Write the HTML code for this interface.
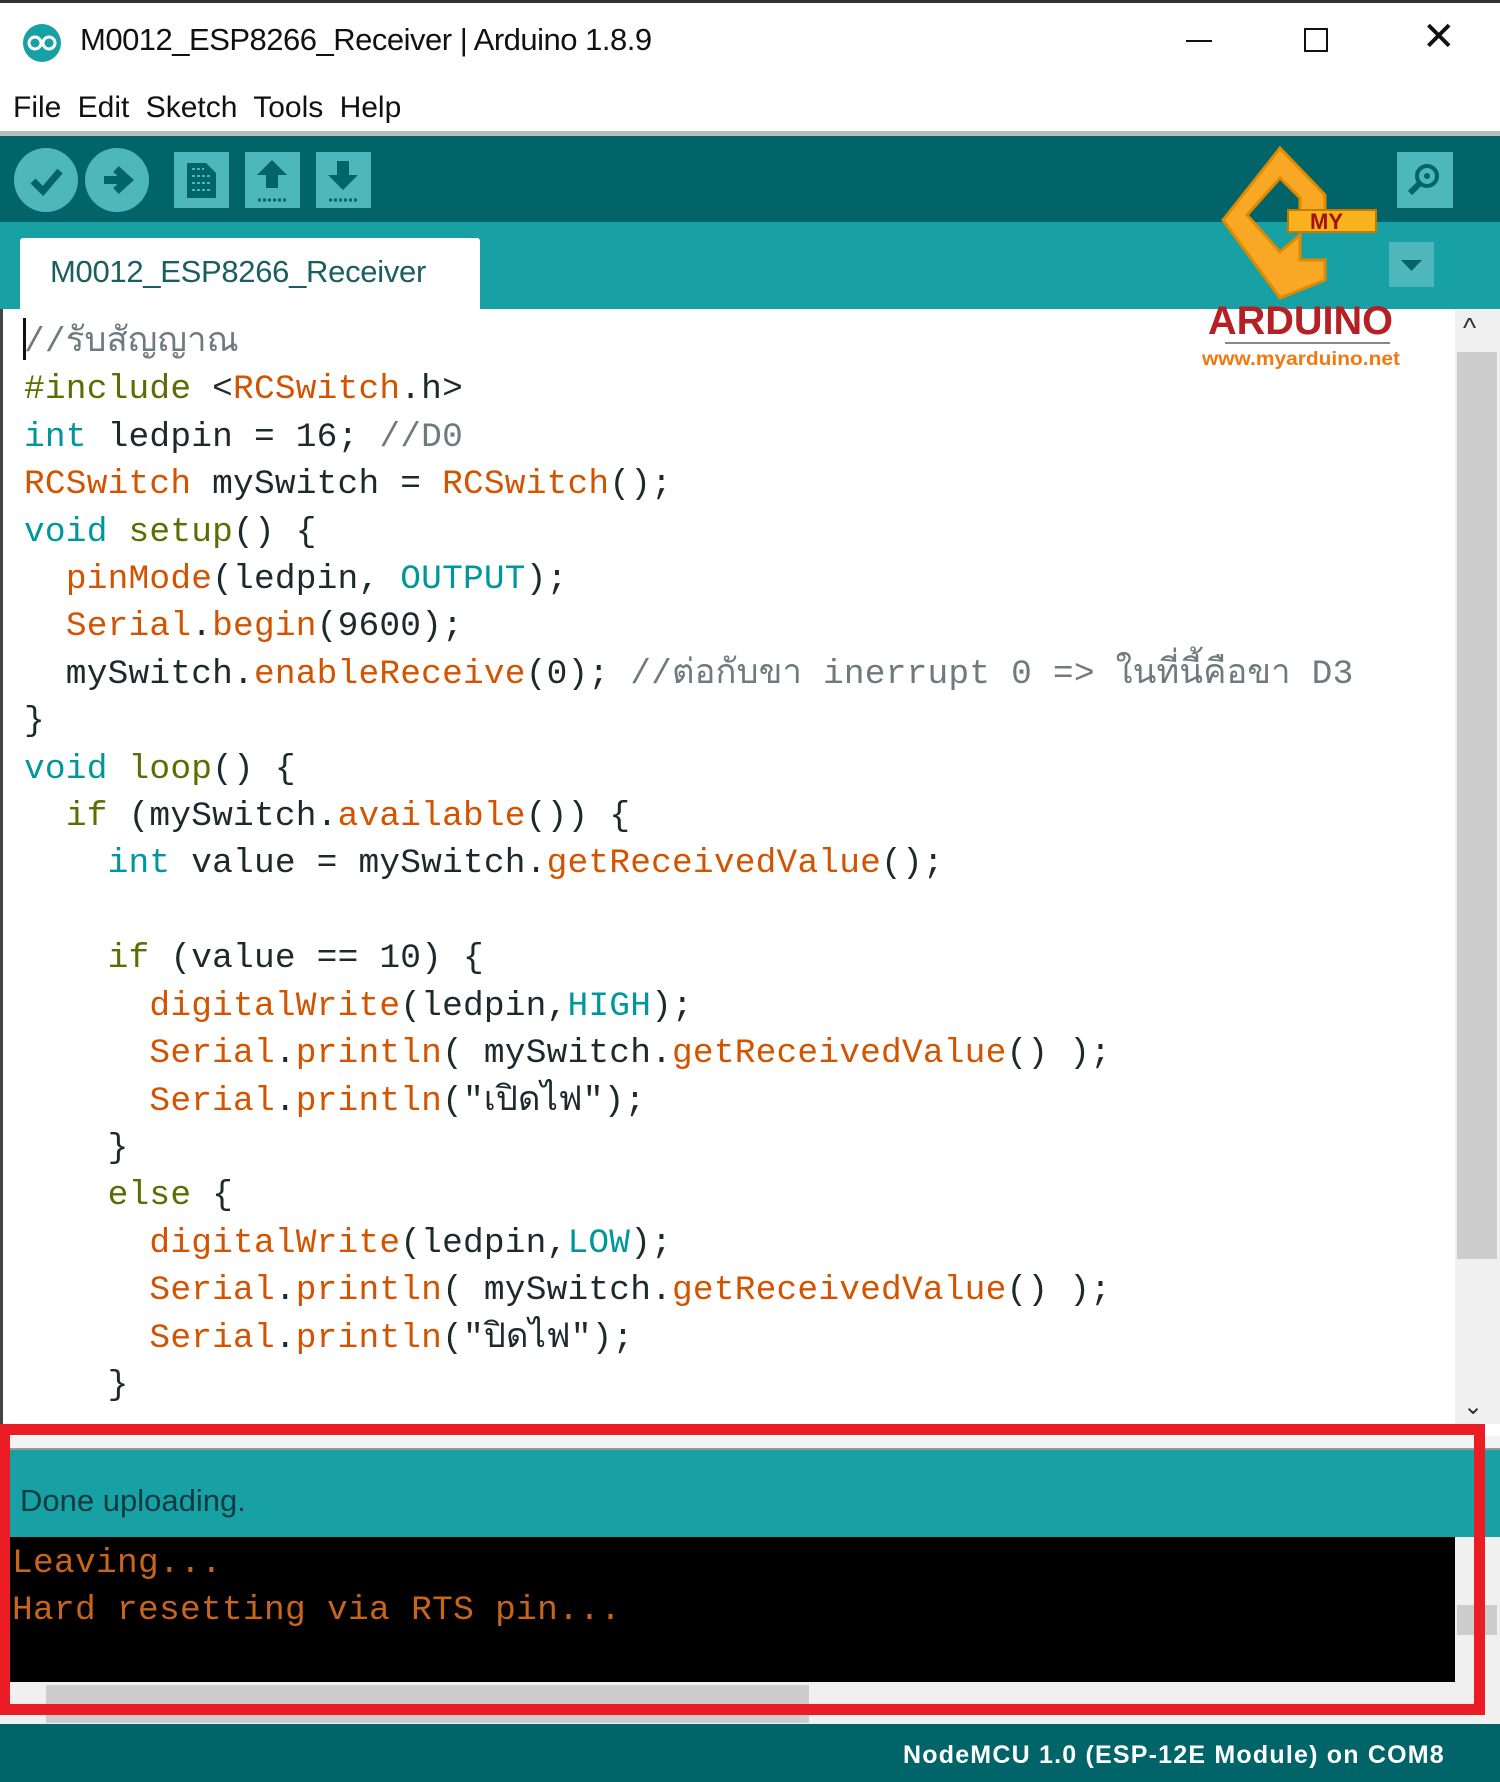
<!DOCTYPE html>
<html><head><meta charset="utf-8"><style>
*{margin:0;padding:0;box-sizing:border-box}
body{width:1500px;height:1782px;position:relative;background:#fff;overflow:hidden;font-family:"Liberation Sans","Noto Sans CJK SC",sans-serif}
.abs{position:absolute}
pre{position:absolute;left:24px;top:319px;font-family:"Liberation Mono","Noto Sans CJK SC",monospace;font-size:34.5px;line-height:47.4px;color:#1c2a2e;letter-spacing:0.2px}
.k{color:#00979c}.f{color:#d35400}.o{color:#5e6d03}.c{color:#6d7a7e}
</style></head><body>
<div class="abs" style="left:0;top:0;width:1500px;height:3px;background:#333"></div>
<svg class="abs" style="left:22px;top:23px" width="40" height="40"><circle cx="20" cy="20" r="19" fill="#17a1a5"/><circle cx="13" cy="20" r="6" fill="none" stroke="#fff" stroke-width="3"/><circle cx="27" cy="20" r="6" fill="none" stroke="#fff" stroke-width="3"/></svg>
<div class="abs" style="left:80px;top:22px;font-size:31px;color:#111;letter-spacing:-0.5px">M0012_ESP8266_Receiver | Arduino 1.8.9</div>
<div class="abs" style="left:1186px;top:40px;width:26px;height:2px;background:#111"></div>
<div class="abs" style="left:1304px;top:28px;width:24px;height:24px;border:2px solid #111"></div>
<div class="abs" style="left:1422px;top:14px;font-size:40px;color:#111;font-weight:300">✕</div>
<div class="abs" style="left:13px;top:91px;font-size:30px;color:#111;word-spacing:8px">File Edit Sketch Tools Help</div>
<div class="abs" style="left:0;top:131px;width:1500px;height:5px;background:#b9bdbd"></div>
<div class="abs" style="left:0;top:136px;width:1500px;height:86px;background:#006468"></div>
<svg class="abs" style="left:0;top:136px" width="400" height="86">
<circle cx="46" cy="44" r="32" fill="#4db7bb"/><path d="M33 45 L43 55 L60 35" stroke="#006468" stroke-width="7" fill="none"/>
<circle cx="117" cy="44" r="32" fill="#4db7bb"/><path d="M104 44 H122 M116 33 L128 44 L116 55" stroke="#006468" stroke-width="8" fill="none"/>
<rect x="174" y="16" width="55" height="56" fill="#4db7bb"/><path d="M187 27 H206 L216 37 V62 H187 Z" fill="#006468"/>
<path d="M192 33 H204 M192 40 H211 M192 47 H211 M192 54 H211" stroke="#4db7bb" stroke-width="2" stroke-dasharray="3 2"/>
<rect x="245" y="16" width="55" height="56" fill="#4db7bb"/><path d="M272 24 L287 39 H278 V52 H266 V39 H257 Z" fill="#006468"/><path d="M258 64 H287" stroke="#006468" stroke-width="3" stroke-dasharray="3 2"/>
<rect x="316" y="16" width="55" height="56" fill="#4db7bb"/><path d="M343 54 L358 39 H349 V25 H337 V39 H328 Z" fill="#006468"/><path d="M329 64 H358" stroke="#006468" stroke-width="3" stroke-dasharray="3 2"/>
</svg>
<svg class="abs" style="left:1397px;top:152px" width="56" height="56"><rect width="56" height="56" fill="#4db7bb"/><circle cx="30" cy="24" r="10" fill="none" stroke="#006468" stroke-width="4"/><circle cx="30" cy="24" r="3" fill="#006468"/><path d="M22 32 L13 41" stroke="#006468" stroke-width="6"/></svg>
<div class="abs" style="left:0;top:222px;width:1500px;height:87px;background:#17a1a5"></div>
<div class="abs" style="left:20px;top:238px;width:460px;height:71px;background:#fff;border-radius:3px 3px 0 0"></div>
<div class="abs" style="left:50px;top:254px;font-size:31px;color:#1b5e60;letter-spacing:-0.3px">M0012_ESP8266_Receiver</div>
<svg class="abs" style="left:1389px;top:242px" width="45" height="45"><rect width="45" height="45" fill="#4db7bb"/><path d="M12 18 H33 L22.5 29 Z" fill="#006468"/></svg>
<div class="abs" style="left:0;top:309px;width:3px;height:1115px;background:#444"></div>
<div class="abs" style="left:1455px;top:309px;width:45px;height:1115px;background:#f0f0f0"></div>
<div class="abs" style="left:1457px;top:352px;width:40px;height:907px;background:#cdcdcd"></div>
<div class="abs" style="left:1463px;top:312px;font-size:28px;color:#333">^</div>
<div class="abs" style="left:1463px;top:1392px;font-size:24px;color:#333">⌄</div>
<div class="abs" style="left:23px;top:318px;width:3px;height:42px;background:#111"></div>
<pre><span class="c">//รับสัญญาณ</span>
<span class="o">#include</span> &lt;<span class="f">RCSwitch</span>.h&gt;
<span class="k">int</span> ledpin = 16; <span class="c">//D0</span>
<span class="f">RCSwitch</span> mySwitch = <span class="f">RCSwitch</span>();
<span class="k">void</span> <span class="o">setup</span>() {
  <span class="f">pinMode</span>(ledpin, <span class="k">OUTPUT</span>);
  <span class="f">Serial</span>.<span class="f">begin</span>(9600);
  mySwitch.<span class="f">enableReceive</span>(0); <span class="c">//ต่อกับขา inerrupt 0 =&gt; ในที่นี้คือขา D3</span>
}
<span class="k">void</span> <span class="o">loop</span>() {
  <span class="o">if</span> (mySwitch.<span class="f">available</span>()) {
    <span class="k">int</span> value = mySwitch.<span class="f">getReceivedValue</span>();

    <span class="o">if</span> (value == 10) {
      <span class="f">digitalWrite</span>(ledpin,<span class="k">HIGH</span>);
      <span class="f">Serial</span>.<span class="f">println</span>( mySwitch.<span class="f">getReceivedValue</span>() );
      <span class="f">Serial</span>.<span class="f">println</span>("เปิดไฟ");
    }
    <span class="o">else</span> {
      <span class="f">digitalWrite</span>(ledpin,<span class="k">LOW</span>);
      <span class="f">Serial</span>.<span class="f">println</span>( mySwitch.<span class="f">getReceivedValue</span>() );
      <span class="f">Serial</span>.<span class="f">println</span>("ปิดไฟ");
    }</pre>
<svg class="abs" style="left:1195px;top:140px" width="230" height="240">
<path d="M85 8 L130 55 L130 80 L105 80 L105 58 L85 38 L52 75 L85 112 L105 95 L105 120 L130 120 L130 140 L85 158 L28 80 Z" fill="#f9a825" stroke="#e08a00" stroke-width="3"/>
<rect x="93" y="70" width="88" height="22" fill="#f7b21d" stroke="#c77a00" stroke-width="2"/>
<text x="115" y="89" font-family="Liberation Sans" font-weight="bold" font-size="22" fill="#a01010">MY</text>
<text x="13" y="194" font-family="Liberation Sans" font-weight="bold" font-size="40" fill="#b52025" textLength="185" lengthAdjust="spacingAndGlyphs">ARDUINO</text>
<rect x="30" y="202" width="165" height="2" fill="#888"/>
<text x="7" y="225" font-family="Liberation Sans" font-weight="bold" font-size="19" fill="#f07a10" textLength="198" lengthAdjust="spacingAndGlyphs">www.myarduino.net</text>
</svg>
<div class="abs" style="left:0;top:1436px;width:1500px;height:14px;background:#f3f3f3"></div>
<div class="abs" style="left:0;top:1448px;width:1500px;height:2px;background:#999"></div>
<div class="abs" style="left:0;top:1450px;width:1500px;height:87px;background:#17a1a5"></div>
<div class="abs" style="left:20px;top:1483px;font-size:31px;color:#0e3b40">Done uploading.</div>
<div class="abs" style="left:0;top:1537px;width:1455px;height:145px;background:#000"></div>
<div class="abs" style="left:1455px;top:1537px;width:45px;height:145px;background:#f0f0f0"></div>
<div class="abs" style="left:1457px;top:1605px;width:40px;height:30px;background:#cdcdcd"></div>
<div class="abs" style="left:12px;top:1540px;font-family:'Liberation Mono',monospace;font-size:34.5px;line-height:47.4px;color:#c8651b;white-space:pre;letter-spacing:0.3px">Leaving...
Hard resetting via RTS pin...</div>
<div class="abs" style="left:0;top:1682px;width:1500px;height:42px;background:#f0f0f0"></div>
<div class="abs" style="left:46px;top:1685px;width:763px;height:38px;background:#cdcdcd"></div>
<div class="abs" style="left:0;top:1424px;width:1485px;height:291px;border:11px solid #ec1c24;border-left-width:10px"></div>
<div class="abs" style="left:0;top:1724px;width:1500px;height:58px;background:#006468"></div>
<div class="abs" style="left:903px;top:1741px;font-size:25px;color:#fff;font-weight:bold;letter-spacing:1.2px">NodeMCU 1.0 (ESP-12E Module) on COM8</div>
</body></html>
